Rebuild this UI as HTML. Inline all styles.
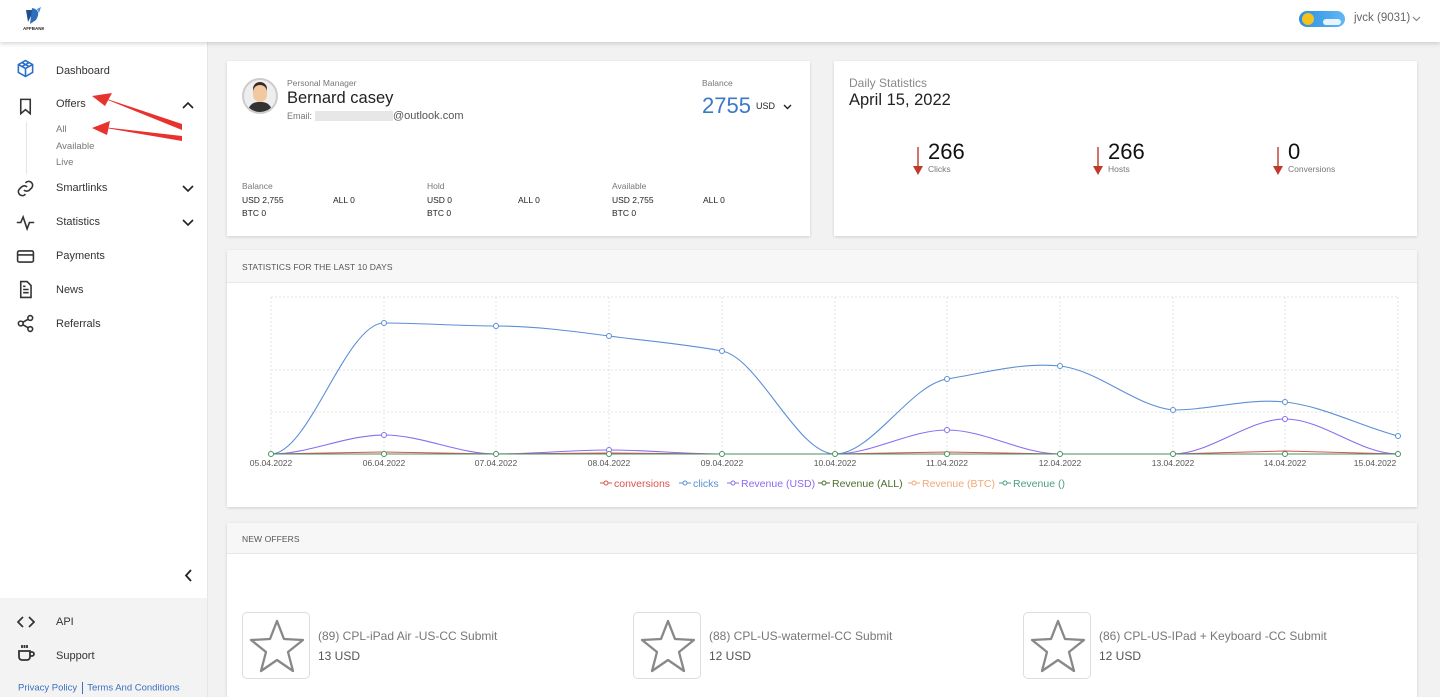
<!DOCTYPE html>
<html><head><meta charset="utf-8"><style>
*{box-sizing:border-box;margin:0;padding:0}
html{overflow:hidden;height:697px}
body{width:1440px;height:697px;overflow:hidden;font-family:"Liberation Sans",sans-serif;background:#f3f2f2;position:relative;color:#333}
.hdr{position:absolute;left:0;top:0;width:1440px;height:42px;background:#fff;box-shadow:0 2px 4px rgba(0,0,0,.15);z-index:2}
.side{position:absolute;left:0;top:42px;width:208px;height:655px;background:#fff;border-right:1px solid #e6e6e6}
.nav{position:absolute;left:56px;font-size:11px;color:#333}
.ic{position:absolute;left:16px}
.sub{position:absolute;left:56px;font-size:9.5px;color:#777}
.card{position:absolute;background:#fff;box-shadow:0 1px 3px rgba(0,0,0,.15)}
.s{font-size:8.5px;color:#777;position:absolute}
.v{font-size:8.5px;color:#222;position:absolute}
.ttl{font-size:8.5px;color:#555;letter-spacing:.1px}
.offer{position:absolute;top:612px}
.offer .box{position:absolute;left:0;top:0;width:68px;height:67px;border:1px solid #ddd;border-radius:5px;background:#fff}
.offer .t{position:absolute;left:76px;top:17px;font-size:12px;color:#777;white-space:nowrap}
.offer .p{position:absolute;left:76px;top:37px;font-size:12px;color:#555;white-space:nowrap}
</style></head><body>
<div class="hdr">
<svg style="position:absolute;left:22px;top:6px" width="22" height="26" viewBox="0 0 22 26"><path d="M4 4 L12 4 L6 16 Z" fill="#1f4e8c"/><path d="M10 2 Q20 4 14 14 L8 18 Z" fill="#2f6db8"/><path d="M15 3 L19 1 L17 7 Z" fill="#4a90d9"/><text x="1" y="24" font-size="4.5" font-family="Liberation Sans" fill="#222" font-weight="bold">AFFBANK</text></svg>
<div style="position:absolute;left:1299px;top:11px;width:46px;height:16px;border-radius:8px;background:linear-gradient(90deg,#2d8fe0,#5fb8f5)"><div style="position:absolute;left:3px;top:2px;width:12px;height:12px;border-radius:6px;background:#f4c21c"></div><div style="position:absolute;left:24px;top:8px;width:18px;height:6px;border-radius:3px;background:#e8f4ff"></div></div>
<div style="position:absolute;left:1354px;top:12px;font-size:11.5px;color:#666">jvck (9031)</div>
<svg style="position:absolute;left:1412px;top:16px" width="9" height="6"><path d="M1 1 L4.5 4.5 L8 1" stroke="#888" fill="none" stroke-width="1.2"/></svg>
</div>
<div class="side">
<svg class="ic" style="top:17px" width="19" height="19" viewBox="0 0 24 24" fill="none" stroke="#2a6fc9" stroke-width="2"><path d="M12 2 L21 7 L21 17 L12 22 L3 17 L3 7 Z M3 7 L12 12 L21 7 M12 12 L12 22 M7.5 4.5 L16.5 9.5 M16.5 4.5 L7.5 9.5"/></svg>
<div class="nav" style="top:23px">Dashboard</div>
<svg class="ic" style="top:55px" width="19" height="19" viewBox="0 0 24 24" fill="none" stroke="#333" stroke-width="2"><path d="M6 3 H18 V21 L12 16 L6 21 Z"/></svg>
<div class="nav" style="top:56px">Offers</div>
<svg style="position:absolute;left:182px;top:59px" width="12" height="8"><path d="M1 7 L6 2 L11 7" stroke="#222" fill="none" stroke-width="1.6"/></svg>
<div style="position:absolute;left:26px;top:80px;width:1px;height:52px;background:#e5e5e5"></div>
<div class="sub" style="top:82px">All</div>
<div class="sub" style="top:99px">Available</div>
<div class="sub" style="top:115px">Live</div>
<svg style="position:absolute;left:90px;top:50px" width="100" height="50"><path d="M8 4 L92 32 L92 38 Z" fill="#e8322e"/><path d="M2 4 L22 1 L15 14 Z" fill="#e8322e"/><path d="M4 34 L92 44 L92 49 Z" fill="#e8322e"/><path d="M2 36 L20 29 L17 43 Z" fill="#e8322e"/></svg>
<svg class="ic" style="top:137px" width="19" height="19" viewBox="0 0 24 24" fill="none" stroke="#333" stroke-width="2"><path d="M10 14 a5 5 0 0 0 7 0 l3-3 a5 5 0 0 0-7-7 l-1 1 M14 10 a5 5 0 0 0-7 0 l-3 3 a5 5 0 0 0 7 7 l1-1"/></svg>
<div class="nav" style="top:140px">Smartlinks</div>
<svg style="position:absolute;left:182px;top:143px" width="12" height="8"><path d="M1 1 L6 6 L11 1" stroke="#222" fill="none" stroke-width="1.6"/></svg>
<svg class="ic" style="top:171px" width="19" height="19" viewBox="0 0 24 24" fill="none" stroke="#333" stroke-width="2"><path d="M1 12 H6 L9 5 L14 20 L17 12 H23"/></svg>
<div class="nav" style="top:174px">Statistics</div>
<svg style="position:absolute;left:182px;top:177px" width="12" height="8"><path d="M1 1 L6 6 L11 1" stroke="#222" fill="none" stroke-width="1.6"/></svg>
<svg class="ic" style="top:205px" width="19" height="19" viewBox="0 0 24 24" fill="none" stroke="#333" stroke-width="2"><rect x="2" y="5" width="20" height="14" rx="2"/><path d="M2 10 H22"/></svg>
<div class="nav" style="top:208px">Payments</div>
<svg class="ic" style="top:238px" width="19" height="19" viewBox="0 0 24 24" fill="none" stroke="#333" stroke-width="2"><path d="M6 2 H14 L19 7 V22 H6 Z M9 12 H16 M9 16 H16 M9 8 H12"/></svg>
<div class="nav" style="top:242px">News</div>
<svg class="ic" style="top:272px" width="19" height="19" viewBox="0 0 24 24" fill="none" stroke="#333" stroke-width="2"><circle cx="18" cy="5" r="3"/><circle cx="6" cy="12" r="3"/><circle cx="18" cy="19" r="3"/><path d="M8.6 13.5 L15.4 17.5 M15.4 6.5 L8.6 10.5"/></svg>
<div class="nav" style="top:276px">Referrals</div>
<svg style="position:absolute;left:184px;top:527px" width="9" height="13"><path d="M7 1 L2 6.5 L7 12" stroke="#222" fill="none" stroke-width="1.8"/></svg>
<div style="position:absolute;left:0;top:556px;width:207px;height:99px;background:#f4f3f3">
<svg style="position:absolute;left:17px;top:17px" width="18" height="14"><path d="M6 2 L1 7 L6 12 M12 2 L17 7 L12 12" stroke="#333" fill="none" stroke-width="1.7"/></svg>
<div class="nav" style="top:18px">API</div>
<svg style="position:absolute;left:17px;top:46px" width="19" height="18" viewBox="0 0 19 18" fill="none" stroke="#333" stroke-width="1.8"><path d="M2 7 H13 V13 a3 3 0 0 1-3 3 H5 a3 3 0 0 1-3-3 Z M13 8 H15 a2 2 0 0 1 0 4 H13 M5 1 V4 M7.5 1 V4 M10 1 V4"/></svg>
<div class="nav" style="top:52px">Support</div>
<div style="position:absolute;left:18px;top:84px;font-size:9.5px;color:#3a6fc1">Privacy Policy <span style="display:inline-block;width:1px;height:12px;background:#3a6fc1;vertical-align:middle;margin:0 2px"></span> Terms And Conditions</div>
</div>
</div>

<div class="card" style="left:227px;top:61px;width:583px;height:175px">
<div style="position:absolute;left:15px;top:17px;width:36px;height:36px;border-radius:50%;border:2px solid #ccc;background:#eee;overflow:hidden"><div style="position:absolute;left:9px;top:5px;width:14px;height:17px;border-radius:7px;background:#f2c8a0;box-shadow:0 -3px 0 #3a2a22"></div><div style="position:absolute;left:4px;top:22px;width:24px;height:14px;border-radius:10px 10px 0 0;background:#333"></div></div>
<div class="s" style="left:60px;top:17px;font-size:8.5px">Personal Manager</div>
<div style="position:absolute;left:60px;top:28px;font-size:16.5px;color:#222">Bernard casey</div>
<div class="s" style="left:60px;top:49px;font-size:9px">Email: <span style="color:#e8e8e8;background:#e6e6e6">jxxxxxxxxxxxxxxxxx</span><span style="color:#555;font-size:11px">@outlook.com</span></div>
<div class="s" style="left:475px;top:17px">Balance</div>
<div style="position:absolute;left:475px;top:32px;font-size:22px;color:#3c78c8">2755</div>
<div style="position:absolute;left:529px;top:40px;font-size:9px;color:#222">USD</div>
<svg style="position:absolute;left:556px;top:43px" width="9" height="6"><path d="M1 1 L4.5 4.5 L8 1" stroke="#222" fill="none" stroke-width="1.4"/></svg>
<div class="s" style="left:15px;top:120px">Balance</div><div class="v" style="left:15px;top:134px">USD 2,755</div><div class="v" style="left:106px;top:134px">ALL 0</div><div class="v" style="left:15px;top:147px">BTC 0</div>
<div class="s" style="left:200px;top:120px">Hold</div><div class="v" style="left:200px;top:134px">USD 0</div><div class="v" style="left:291px;top:134px">ALL 0</div><div class="v" style="left:200px;top:147px">BTC 0</div>
<div class="s" style="left:385px;top:120px">Available</div><div class="v" style="left:385px;top:134px">USD 2,755</div><div class="v" style="left:476px;top:134px">ALL 0</div><div class="v" style="left:385px;top:147px">BTC 0</div>
</div>

<div class="card" style="left:834px;top:61px;width:583px;height:175px">
<div style="position:absolute;left:15px;top:15px;font-size:12px;color:#888">Daily Statistics</div>
<div style="position:absolute;left:15px;top:30px;font-size:16.5px;color:#222">April 15, 2022</div>
<svg style="position:absolute;left:78px;top:86px" width="12" height="30"><path d="M6 0 V20" stroke="#c0392b" stroke-width="1.4"/><path d="M1 19 L11 19 L6 28 Z" fill="#c0392b"/></svg>
<div style="position:absolute;left:94px;top:78px;font-size:22px;color:#111">266</div><div class="s" style="left:94px;top:103px">Clicks</div>
<svg style="position:absolute;left:258px;top:86px" width="12" height="30"><path d="M6 0 V20" stroke="#c0392b" stroke-width="1.4"/><path d="M1 19 L11 19 L6 28 Z" fill="#c0392b"/></svg>
<div style="position:absolute;left:274px;top:78px;font-size:22px;color:#111">266</div><div class="s" style="left:274px;top:103px">Hosts</div>
<svg style="position:absolute;left:438px;top:86px" width="12" height="30"><path d="M6 0 V20" stroke="#c0392b" stroke-width="1.4"/><path d="M1 19 L11 19 L6 28 Z" fill="#c0392b"/></svg>
<div style="position:absolute;left:454px;top:78px;font-size:22px;color:#111">0</div><div class="s" style="left:454px;top:103px">Conversions</div>
</div>

<div class="card" style="left:227px;top:250px;width:1190px;height:257px">
<div style="position:absolute;left:0;top:0;width:100%;height:33px;background:#f7f7f7;border-bottom:1px solid #e8e8e8"><div class="ttl" style="position:absolute;left:15px;top:12px">STATISTICS FOR THE LAST 10 DAYS</div></div>
</div>
<svg style="position:absolute;left:0;top:0" width="1440" height="697">
<g stroke="#e3e3e3" stroke-dasharray="2,2" stroke-width="1">
<path d="M271 297 H1398 M271 370 H1398 M271 412 H1398 M271 454 H1398"/>
<path d="M271 297 V454 M384 297 V454 M496 297 V454 M609 297 V454 M722 297 V454 M835 297 V454 M947 297 V454 M1060 297 V454 M1173 297 V454 M1285 297 V454 M1398 297 V454"/>
</g>
<path fill="none" stroke="#5b8fd6" stroke-width="1.1" d="M271 454 C309 454 346 323 384 323 C421 323 459 326 496 326 C534 326 571 331 609 336 C647 341 684 344 722 351 C759 358 797 454 835 454 C872 454 910 385 947 379 C985 373 1022 362 1060 366 C1098 370 1135 406 1173 410 C1210 410 1248 398 1285 402 C1323 406 1360 426 1398 436"/>
<path fill="none" stroke="#8a6cf0" stroke-width="1.1" d="M271 454 C309 454 346 435 384 435 C421 435 459 454 496 454 C534 454 571 450 609 450 C647 450 684 454 722 454 C759 454 797 454 835 454 C872 454 910 430 947 430 C985 430 1022 454 1060 454 C1098 454 1135 454 1173 454 C1210 454 1248 419 1285 419 C1323 419 1360 454 1398 454"/>
<path fill="none" stroke="#d9534f" stroke-width="1" d="M271 454 L384 452 L496 454 L609 453 L722 454 L835 454 L947 452 L1060 454 L1173 454 L1285 451 L1398 454"/>
<path fill="none" stroke="#4a8f5f" stroke-width="1.1" d="M271 454 H1398"/>
<g fill="#fff" stroke="#5b8fd6"><circle cx="384" cy="323" r="2.5"/><circle cx="496" cy="326" r="2.5"/><circle cx="609" cy="336" r="2.5"/><circle cx="722" cy="351" r="2.5"/><circle cx="947" cy="379" r="2.5"/><circle cx="1060" cy="366" r="2.5"/><circle cx="1173" cy="410" r="2.5"/><circle cx="1285" cy="402" r="2.5"/><circle cx="1398" cy="436" r="2.5"/></g>
<g fill="#fff" stroke="#8a6cf0"><circle cx="384" cy="435" r="2.5"/><circle cx="609" cy="450" r="2.5"/><circle cx="947" cy="430" r="2.5"/><circle cx="1285" cy="419" r="2.5"/></g>
<g fill="#fff" stroke="#4a8f5f"><circle cx="271" cy="454" r="2.5"/><circle cx="384" cy="454" r="2.5"/><circle cx="496" cy="454" r="2.5"/><circle cx="609" cy="454" r="2.5"/><circle cx="722" cy="454" r="2.5"/><circle cx="835" cy="454" r="2.5"/><circle cx="947" cy="454" r="2.5"/><circle cx="1060" cy="454" r="2.5"/><circle cx="1173" cy="454" r="2.5"/><circle cx="1285" cy="454" r="2.5"/><circle cx="1398" cy="454" r="2.5"/></g>
<g font-family="Liberation Sans" font-size="8.5" fill="#555" text-anchor="middle">
<text x="271" y="466">05.04.2022</text><text x="384" y="466">06.04.2022</text><text x="496" y="466">07.04.2022</text><text x="609" y="466">08.04.2022</text><text x="722" y="466">09.04.2022</text><text x="835" y="466">10.04.2022</text><text x="947" y="466">11.04.2022</text><text x="1060" y="466">12.04.2022</text><text x="1173" y="466">13.04.2022</text><text x="1285" y="466">14.04.2022</text><text x="1375" y="466">15.04.2022</text>
</g>
<g font-family="Liberation Sans" font-size="10.5">
<path d="M600 483 H612" stroke="#d9534f"/><circle cx="606" cy="483" r="2" fill="#fff" stroke="#d9534f"/><text x="614" y="487" fill="#d9534f">conversions</text>
<path d="M679 483 H691" stroke="#5b8fd6"/><circle cx="685" cy="483" r="2" fill="#fff" stroke="#5b8fd6"/><text x="693" y="487" fill="#5b8fd6">clicks</text>
<path d="M727 483 H739" stroke="#8a6cf0"/><circle cx="733" cy="483" r="2" fill="#fff" stroke="#8a6cf0"/><text x="741" y="487" fill="#8a6cf0">Revenue (USD)</text>
<path d="M818 483 H830" stroke="#4a6f2f"/><circle cx="824" cy="483" r="2" fill="#fff" stroke="#4a6f2f"/><text x="832" y="487" fill="#4a6f2f">Revenue (ALL)</text>
<path d="M908 483 H920" stroke="#f0a878"/><circle cx="914" cy="483" r="2" fill="#fff" stroke="#f0a878"/><text x="922" y="487" fill="#f0a878">Revenue (BTC)</text>
<path d="M999 483 H1011" stroke="#4a9f7f"/><circle cx="1005" cy="483" r="2" fill="#fff" stroke="#4a9f7f"/><text x="1013" y="487" fill="#4a9f7f">Revenue ()</text>
</g>
</svg>

<div class="card" style="left:227px;top:523px;width:1190px;height:174px">
<div style="position:absolute;left:0;top:0;width:100%;height:31px;background:#f7f7f7;border-bottom:1px solid #e8e8e8"><div class="ttl" style="position:absolute;left:15px;top:11px">NEW OFFERS</div></div>
</div>
<div class="offer" style="left:242px"><div class="box"><svg width="68" height="67" viewBox="0 0 68 67"><path d="M34 8 L41 26 L60 27 L45 39 L50 58 L34 47 L18 58 L23 39 L8 27 L27 26 Z" fill="none" stroke="#888" stroke-width="2.3" stroke-linejoin="round"/></svg></div><div class="t">(89) CPL-iPad Air -US-CC Submit</div><div class="p">13 USD</div></div>
<div class="offer" style="left:633px"><div class="box"><svg width="68" height="67" viewBox="0 0 68 67"><path d="M34 8 L41 26 L60 27 L45 39 L50 58 L34 47 L18 58 L23 39 L8 27 L27 26 Z" fill="none" stroke="#888" stroke-width="2.3" stroke-linejoin="round"/></svg></div><div class="t">(88) CPL-US-watermel-CC Submit</div><div class="p">12 USD</div></div>
<div class="offer" style="left:1023px"><div class="box"><svg width="68" height="67" viewBox="0 0 68 67"><path d="M34 8 L41 26 L60 27 L45 39 L50 58 L34 47 L18 58 L23 39 L8 27 L27 26 Z" fill="none" stroke="#888" stroke-width="2.3" stroke-linejoin="round"/></svg></div><div class="t">(86) CPL-US-IPad + Keyboard -CC Submit</div><div class="p">12 USD</div></div>
</body></html>
